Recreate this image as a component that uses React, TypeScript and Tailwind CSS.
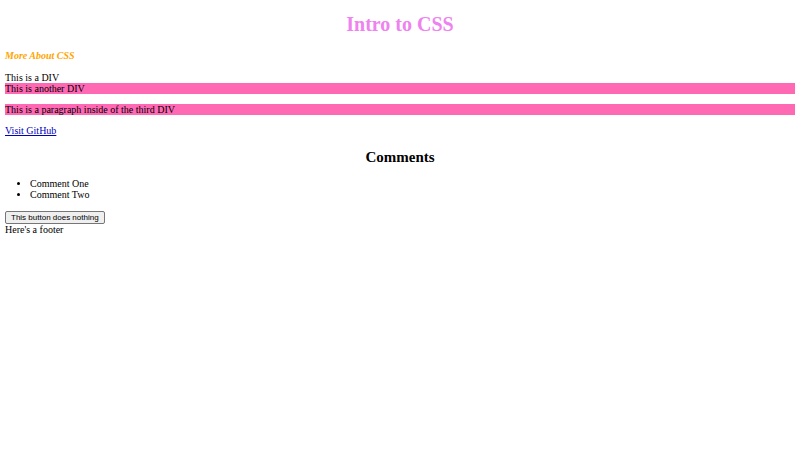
export default function App() {
  return (
    <main className="px-[5px] pt-3 font-['Liberation_Serif',serif] text-[10px] leading-[11px] text-black">
      <h1 className="text-center text-[20px] leading-[25px] font-bold text-[violet]">Intro to CSS</h1>
      <h3 className="mt-[13px] font-bold italic text-[orange]">More About CSS</h3>
      <div className="mt-[11px]">This is a DIV</div>
      <div className="bg-[hotpink]">This is another DIV</div>
      <div className="mt-[10px] bg-[hotpink]">
        <p>This is a paragraph inside of the third DIV</p>
      </div>
      <a href="https://github.com" className="mt-[10px] inline-block text-[#0000bb] underline">Visit GitHub</a>
      <h2 className="mt-3 text-center text-[15px] leading-[18px] font-bold">Comments</h2>
      <ul className="mt-3 list-disc pl-[25px]">
        <li>Comment One</li>
        <li>Comment Two</li>
      </ul>
      <button
        type="button"
        className="mt-[11px] block rounded-xs border border-[#767676] bg-[#efefef] px-[5px] font-['Liberation_Sans',sans-serif] text-[8px] leading-[11px]"
      >
        This button does nothing
      </button>
      <footer>Here's a footer</footer>
    </main>
  )
}
